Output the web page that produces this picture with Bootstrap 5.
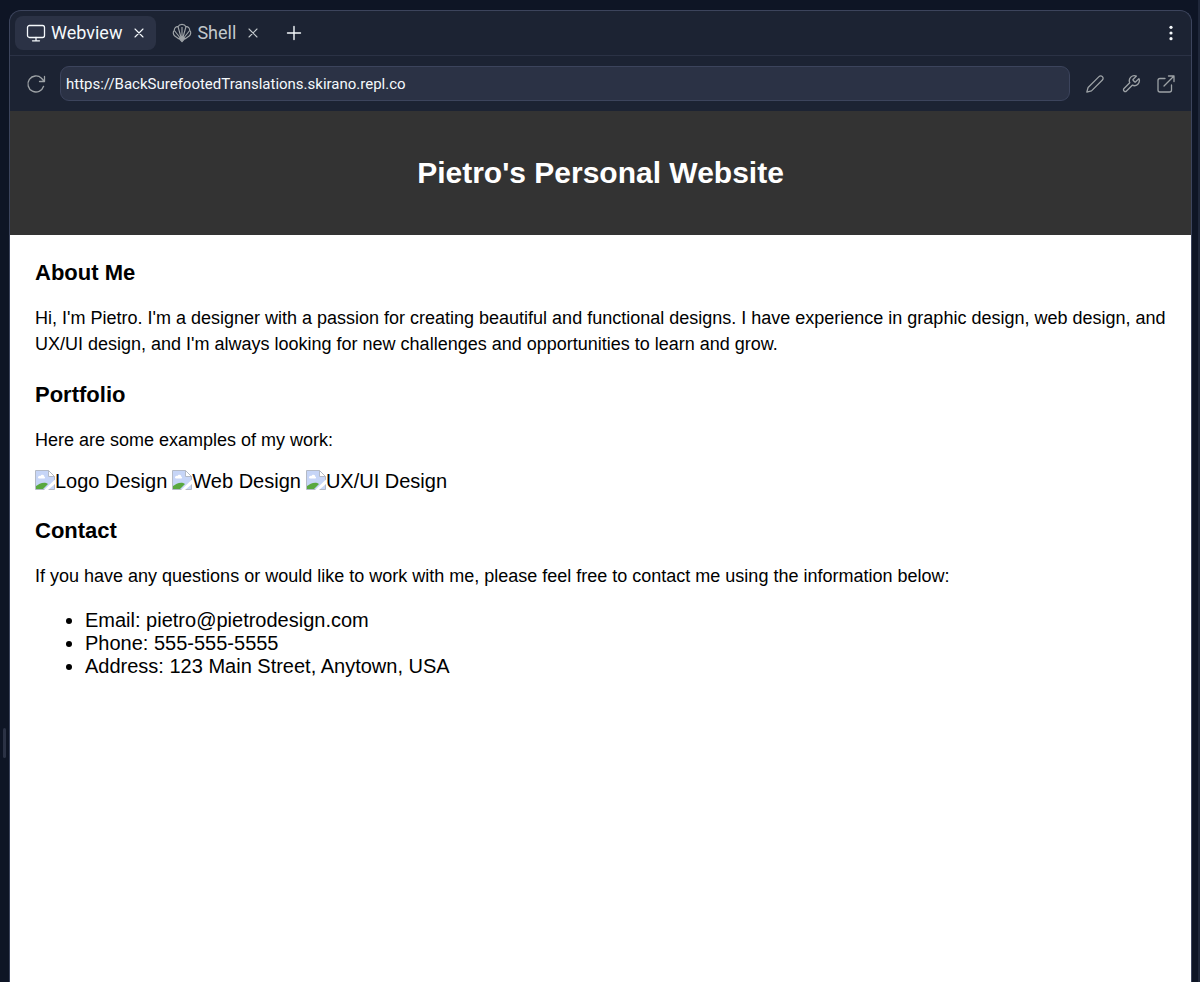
<!DOCTYPE html>
<html lang="en">
<head>
<meta charset="utf-8">
<meta name="viewport" content="width=device-width, initial-scale=1">
<title>Webview</title>
<link href="https://cdn.jsdelivr.net/npm/bootstrap@5.3.0/dist/css/bootstrap.min.css" rel="stylesheet">
<style>
  body { background: #0e1525; font-family: Roboto, "Noto Sans", sans-serif; color: #f5f9fc; }
  svg { display: block; flex: none; }
  button { color: inherit; }
  .workspace { padding: 10px 6px 0 9px; border-right: 2px solid #1f273a; }
  .pane { background: #1c2333; border: 1px solid #3c445c; border-bottom: 0; border-radius: 12px 12px 0 0; }
  .tab-strip { height: 45px; padding: 0 10px 0 5px; border-bottom: 1px solid #2b3245; }
  .tabs { gap: 5px; }
  .pane-tab { height: 34px; padding: 0 12px 0 11px; border-radius: 8px; color: #c2c8cc; }
  .pane-tab.active { background: #2b3245; color: #f5f9fc; }
  .tab-title { gap: 5px; }
  .tab-label { font-size: 18px; line-height: 24px; }
  .plain { background: none; border: 0; padding: 0; }
  .address-bar { height: 55px; padding: 0 16px 0 15px; color: #9da2a6; }
  .address { height: 35px; margin: 0 15px 0 13px; padding: 0 5px; font-size: 15px; color: #f5f9fc; background: #2b3245; border: 1px solid #3c445c; border-radius: 9px; }
  .address:focus { background: #2b3245; color: #f5f9fc; box-shadow: none; }
  .grip { left: 3px; top: 728px; width: 3px; height: 30px; background: #2b3245; border-radius: 2px; }
  .site { background: #fff; color: #000; font-family: "Liberation Sans", Arial, sans-serif; font-size: 20px; line-height: 23px; }
  .site-header { background: #333; color: #fff; padding: 42px 25px 43px; }
  .site-header h1 { font-size: 30px; line-height: 39px; font-weight: 700; }
  .site-body { padding: 24px 25px; }
  .site-body h2 { font-size: 22px; line-height: 27px; font-weight: 700; margin-bottom: 19px; }
  .site-body p { font-size: 18px; line-height: 26px; margin-bottom: 24px; }
  .site-body .lead-in { margin-bottom: 17px; }
  .site-body .list-intro { margin-bottom: 20px; }
  .works { margin-bottom: 24px; gap: 5px; }
  .contact-list { padding-left: 50px; }
</style>
</head>
<body>
<svg width="0" height="0" class="position-absolute" aria-hidden="true">
  <symbol id="broken" viewBox="0 0 20 20">
    <path d="M.5.5h13l6 6v13H.5z" fill="#c6d5f7" stroke="#b4bac6"/>
    <path d="M3 8c0-2 1.500-2.500 2.500-2 .8-2 4-1.500 3.800.8 1 0 1 1.700 0 1.700H4z" fill="#fff"/>
    <path d="M1 19v-3c3-2 8-5 12-2l-5 5z" fill="#58a83f"/>
    <path d="M9 20L20 9.500V14l-7 6z" fill="#fff"/>
    <path d="M13.500.5v6h6z" fill="#fff" stroke="#b4bac6"/>
  </symbol>
  <symbol id="close" viewBox="0 0 10 10"><path d="M1 1l8 8M9 1L1 9" fill="none" stroke="currentColor" stroke-width="1.100" stroke-linecap="round"/></symbol>
</svg>

<div class="workspace min-vh-100 d-flex position-relative">
  <div class="grip position-absolute"></div>
  <main class="pane flex-grow-1 d-flex flex-column overflow-hidden">
    <div class="tab-strip d-flex align-items-center">
      <div class="tabs d-flex">
        <div class="pane-tab active d-flex align-items-center">
          <button class="plain tab-title d-flex align-items-center" type="button">
            <svg width="20" height="18" viewBox="0 0 20 18" fill="none" stroke="currentColor" stroke-width="1.300" stroke-linecap="round"><rect x="1.500" y="1.500" width="17" height="12" rx="2"/><path d="M10 13.500v3.300M6.500 16.800h7"/></svg>
            <span class="tab-label">Webview</span>
          </button>
          <button class="plain ps-2 ms-1" type="button" aria-label="Close Webview"><svg width="10" height="10"><use href="#close"/></svg></button>
        </div>
        <div class="pane-tab d-flex align-items-center">
          <button class="plain tab-title d-flex align-items-center" type="button">
            <svg width="20" height="20" viewBox="0 0 20 20" fill="none" stroke="#9da2a6" stroke-width="1.200" stroke-linejoin="round"><path d="M7 16L2.500 12.800C1 11 .8 8.500 2.300 7.500 2.200 5 3.800 3.400 6 3.700 6.800 2 8.500 1.300 10 1.300s3.200.7 4 2.400c2.200-.3 3.800 1.300 3.700 3.800 1.500 1 1.300 3.500-.2 5.300L13 16"/><path d="M8.300 15L2.300 7.500M9.200 15L6 3.700M10.800 15L14 3.700M11.700 15l6-7.500M10 15V4"/><path d="M7 15.300l3 3.400 3-3.400-3-1.300z" fill="#9da2a6"/></svg>
            <span class="tab-label">Shell</span>
          </button>
          <button class="plain ps-2 ms-1" type="button" aria-label="Close Shell"><svg width="10" height="10"><use href="#close"/></svg></button>
        </div>
      </div>
      <button class="plain ms-3" type="button" aria-label="New tab"><svg width="16" height="16" viewBox="0 0 16 16" stroke="currentColor" stroke-width="1.400" stroke-linecap="round"><path d="M8 1.500v13M1.500 8h13"/></svg></button>
      <button class="plain ms-auto" type="button" aria-label="Pane options"><svg width="20" height="20" viewBox="0 0 20 20" fill="currentColor"><circle cx="10" cy="4.300" r="1.600"/><circle cx="10" cy="10" r="1.600"/><circle cx="10" cy="15.700" r="1.600"/></svg></button>
    </div>

    <div class="address-bar d-flex align-items-center">
      <button class="plain" type="button" aria-label="Reload"><svg width="22" height="22" viewBox="0 0 22 22" fill="none" stroke="currentColor" stroke-width="1.300" stroke-linecap="round" stroke-linejoin="round"><path d="M19.500 3.500v5h-5M19.200 8.300L16.500 5.200A8 8 0 1 0 18.600 13.300"/></svg></button>
      <input class="address form-control flex-grow-1" type="text" aria-label="Address" value="https://BackSurefootedTranslations.skirano.repl.co">
      <div class="d-flex gap-3">
        <button class="plain" type="button" aria-label="Edit"><svg width="20" height="20" viewBox="0 0 20 20" fill="none" stroke="currentColor" stroke-width="1.300" stroke-linejoin="round"><path d="M14 2.600a2.400 2.400 0 0 1 3.400 3.400L6.500 16.900 1.800 18.200 3.100 13.500z"/></svg></button>
        <button class="plain" type="button" aria-label="Developer tools"><svg width="20" height="20" viewBox="0 0 24 24" fill="none" stroke="currentColor" stroke-width="1.600" stroke-linejoin="round" stroke-linecap="round"><path d="M14.700 6.300a1 1 0 0 0 0 1.400l1.600 1.600a1 1 0 0 0 1.400 0l3.770-3.770a6 6 0 0 1-7.940 7.940l-6.910 6.910a2.120 2.120 0 0 1-3-3l6.910-6.910a6 6 0 0 1 7.940-7.940z"/></svg></button>
        <button class="plain" type="button" aria-label="Open in new tab"><svg width="18" height="20" viewBox="0 0 18 20" fill="none" stroke="currentColor" stroke-width="1.300" stroke-linejoin="round" stroke-linecap="round"><path d="M8 4.500H3a2 2 0 0 0-2 2V16a2 2 0 0 0 2 2h9.500a2 2 0 0 0 2-2v-5M7 12L17 2M11.500 2H17v5.500"/></svg></button>
      </div>
    </div>

    <div class="site flex-grow-1">
      <header class="site-header text-center"><h1 class="m-0">Pietro's Personal Website</h1></header>
      <div class="site-body">
        <section>
          <h2>About Me</h2>
          <p>Hi, I'm Pietro. I'm a designer with a passion for creating beautiful and functional designs. I have experience in graphic design, web design, and UX/UI design, and I'm always looking for new challenges and opportunities to learn and grow.</p>
        </section>
        <section>
          <h2>Portfolio</h2>
          <p class="lead-in">Here are some examples of my work:</p>
          <div class="works d-flex flex-wrap">
            <span class="d-flex"><svg width="20" height="20"><use href="#broken"/></svg>Logo Design</span>
            <span class="d-flex"><svg width="20" height="20"><use href="#broken"/></svg>Web Design</span>
            <span class="d-flex"><svg width="20" height="20"><use href="#broken"/></svg>UX/UI Design</span>
          </div>
        </section>
        <section>
          <h2>Contact</h2>
          <p class="list-intro">If you have any questions or would like to work with me, please feel free to contact me using the information below:</p>
          <ul class="contact-list mb-0">
            <li>Email: pietro@pietrodesign.com</li>
            <li>Phone: 555-555-5555</li>
            <li>Address: 123 Main Street, Anytown, USA</li>
          </ul>
        </section>
      </div>
    </div>
  </main>
</div>
<script src="https://cdn.jsdelivr.net/npm/bootstrap@5.3.0/dist/js/bootstrap.bundle.min.js"></script>
</body>
</html>
